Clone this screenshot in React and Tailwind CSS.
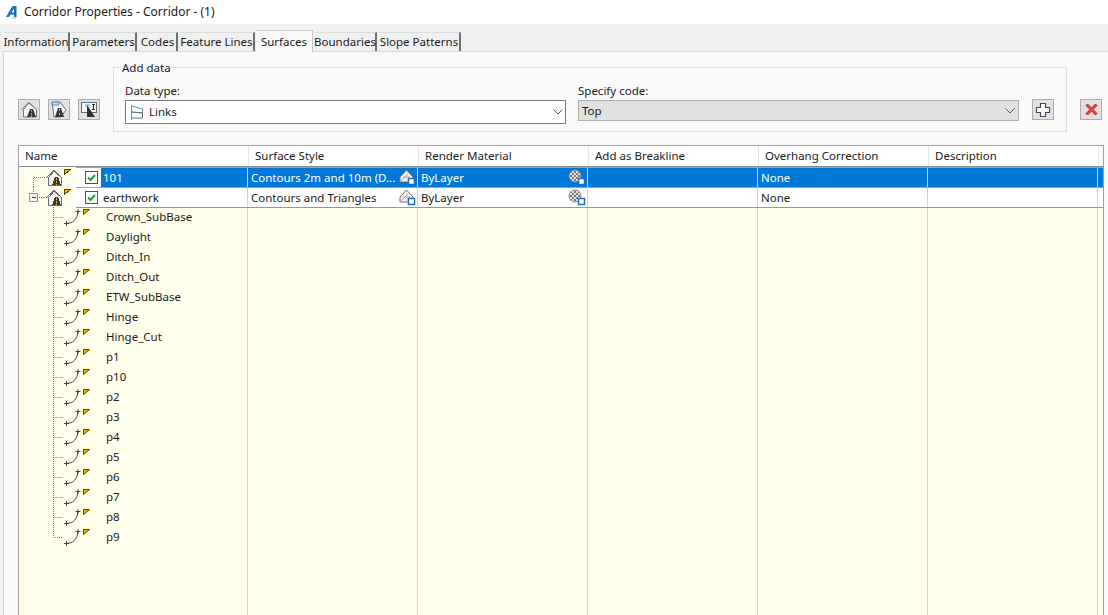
import React from "react";

const tabs = [
  ["Information", "w-[66px]"],
  ["Parameters", "w-[65px]"],
  ["Codes", "w-[39px]"],
  ["Feature Lines", "w-[75px]"],
  ["Surfaces", "w-[57px]"],
  ["Boundaries", "w-[62px]"],
  ["Slope Patterns", "w-[82px]"],
];
const columns = ["Surface Style", "Render Material", "Add as Breakline", "Overhang Correction", "Description"];
const children = ["Crown_SubBase", "Daylight", "Ditch_In", "Ditch_Out", "ETW_SubBase", "Hinge", "Hinge_Cut", "p1", "p10", "p2", "p3", "p4", "p5", "p6", "p7", "p8", "p9"];

function Marker({ x, y }) {
  return <path d={`M${x + 0.5} ${y + 0.5}h6l-6 5z`} fill="#f7b500" stroke="#5a4300" strokeWidth="1" />;
}

function HouseRoad({ x = 0, y = 0 }) {
  return (
    <g transform={`translate(${x} ${y})`}>
      <path d="M1.5 8.5L9 1.5l7.5 7" fill="#f4f4f4" stroke="#66707a" />
      <path d="M3.5 8.5v7.5h13V8.5L9 2z" fill="#f4f4f4" stroke="#66707a" />
      <path d="M7 16l3-8h3l3 8z" fill="#333a40" />
      <path d="M11.5 9v1.5M11.5 12v1.5M11.5 14.5V16" stroke="#f2c200" />
    </g>
  );
}

function Elbow({ x }) {
  return (
    <g transform={`translate(${x} 0)`} stroke="#3f4850" fill="none">
      <path d="M2.5 16.5c6 0 11-4 11.5-12.500" />
      <path d="M0 16.500h5M2.500 14v5M11.500 4.500h5M14 2v5" />
    </g>
  );
}

function StyleIcon() {
  return (
    <svg width="17" height="17" viewBox="0 0 17 17" className="shrink-0">
      <path d="M1 8L7.500 1 14 8v5H1z" fill="#efefef" stroke="#6d6d6d" />
      <path d="M1 13L9 5M4 8h7" stroke="#aaa" />
      <rect x="9.500" y="9.500" width="6" height="6" fill="#fff" stroke="#1d6fc0" strokeWidth="1.500" />
    </svg>
  );
}

function MaterialIcon({ id }) {
  return (
    <svg width="18" height="17" viewBox="0 0 18 17" className="shrink-0">
      <defs>
        <pattern id={id} width="4" height="4" patternUnits="userSpaceOnUse">
          <rect width="4" height="4" fill="#e4e4e4" />
          <rect width="2" height="2" fill="#777" />
          <rect x="2" y="2" width="2" height="2" fill="#777" />
        </pattern>
      </defs>
      <circle cx="7" cy="7" r="6" fill={`url(#${id})`} stroke="#8a8a8a" />
      <rect x="10.500" y="9.500" width="6" height="6" fill="#fff" stroke="#1d6fc0" strokeWidth="1.500" />
    </svg>
  );
}

function Check() {
  return (
    <span className="flex h-[13px] w-[13px] items-center justify-center border border-[#33597f] bg-white">
      <svg width="11" height="11" viewBox="0 0 11 11">
        <path d="M2 5.500l2.500 2.500L9 3" fill="none" stroke="#1f9b35" strokeWidth="2" />
      </svg>
    </span>
  );
}

function Chevron() {
  return (
    <svg width="10" height="6" viewBox="0 0 10 6">
      <path d="M.5.500L5 5 9.500.500" fill="none" stroke="#555" />
    </svg>
  );
}

function ToolButton({ children: icon }) {
  return (
    <button className="flex h-[21px] w-[22px] shrink-0 items-center justify-center border border-[#adadad] bg-[#e1e1e1]">
      {icon}
    </button>
  );
}

function BodyCells({ first, second, third, selected, fifth = false }) {
  const line = "border-r border-[#ffc0c0]";
  const text = selected ? "text-white" : "text-[#1a1a1a]";
  return (
    <>
      <div className={`flex h-full w-[170px] shrink-0 items-center justify-between pl-[3px] pr-px ${line} ${text}`}>
        <span>{first}</span>
        {second}
      </div>
      <div className={`flex h-full w-[170px] shrink-0 items-center justify-between pl-[3px] pr-px ${line} ${text}`}>
        <span>{fifth ? "ByLayer" : ""}</span>
        {third}
      </div>
      <div className={`h-full w-[170px] shrink-0 ${line}`} />
      <div className={`flex h-full w-[170px] shrink-0 items-center pl-[3px] ${line} ${text}`}>{fifth ? "None" : ""}</div>
      <div className={`h-full w-[170px] shrink-0 ${line}`} />
    </>
  );
}

function SurfaceRow({ tree, name, surface, icon, material, selected }) {
  return (
    <div className={`flex h-5 shrink-0 ${selected ? "" : "relative z-10"}`}>
      <div className="flex h-full w-[57px] shrink-0 bg-[#ffffeb]">
        <svg width="57" height="20" viewBox="0 0 57 20" shapeRendering="crispEdges">
          {tree}
        </svg>
      </div>
      <div className={`flex min-w-0 flex-1 border-t border-[#8fa7bf] ${selected ? "bg-[#0078d7] shadow-none" : "bg-white shadow-[0_1px_0_#7f9db9]"}`}>
        <div className="flex h-full w-[172px] shrink-0 border-r border-[#ffc0c0]">
          <div className="flex h-full w-[25px] shrink-0 items-center bg-white pl-[9px]">
            <Check />
          </div>
          <div className={`flex flex-1 items-center pl-[2px] ${selected ? "text-white" : "text-[#1a1a1a]"}`}>{name}</div>
        </div>
        <BodyCells first={surface} second={icon} third={material} selected={selected} fifth />
      </div>
    </div>
  );
}

export default function App() {
  return (
    <div className="flex h-[615px] w-[1108px] flex-col overflow-hidden bg-[#f0f0f0] font-['Noto_Sans',sans-serif] text-[11.500px] leading-4 text-[#1a1a1a]">
      <div className="flex h-6 shrink-0 items-center gap-[7px] bg-white pl-[6px] text-[12px]">
        <svg width="11" height="14" viewBox="0 0 11 14">
          <path d="M0 12L6.500 1H10.500V12H8V9.500H4.500L3 12zM5.500 7.500H8V3.500z" fill="#1f6fb2" fillRule="evenodd" />
          <path d="M6 13h4" stroke="#9dbbd4" />
        </svg>
        <span>Corridor Properties - Corridor - (1)</span>
      </div>

      <div className="flex h-[27px] shrink-0 items-end gap-[2px] pl-[4px]">
        {tabs.map(([tab, width]) =>
          tab === "Surfaces" ? (
            <div key={tab} className={`relative z-10 -mb-px -ml-[1px] flex h-[22px] ${width} shrink-0 items-center justify-center border-r border-t border-[#c8c8c8] bg-[#f9f9f9]`}>
              {tab}
            </div>
          ) : (
            <div key={tab} className={`flex h-[19px] ${width} shrink-0 items-center justify-center whitespace-nowrap border-r-2 border-t border-r-[#6f6f6f] border-t-[#dcdcdc] bg-[#f0f0f0]`}>
              {tab}
            </div>
          )
        )}
      </div>

      <div className="ml-[3px] flex min-h-0 flex-1 flex-col border-t border-l border-[#d9d9d9] bg-[#f9f9f9] pt-[15px]">
        <div className="flex shrink-0 items-start">
          <div className="flex w-[109px] shrink-0 gap-2 pl-[14px] pt-[32px]">
            <ToolButton>
              <svg width="18" height="17" viewBox="0 0 18 17" shapeRendering="geometricPrecision"><HouseRoad /></svg>
            </ToolButton>
            <ToolButton>
              <svg width="18" height="17" viewBox="0 0 18 17">
                <path d="M2 1h8l6 8-5 7H4z" fill="#f4f4f4" stroke="#66707a" />
                <path d="M2 1h7v3H2z" fill="#bcd7f2" stroke="#5d90c7" />
                <path d="M5 16l3-9h3l3 9z" fill="#333a40" />
                <path d="M9.500 8v2M9.500 12v2" stroke="#f2c200" />
              </svg>
            </ToolButton>
            <ToolButton>
              <svg width="18" height="17" viewBox="0 0 18 17">
                <rect x="1.500" y="1.500" width="15" height="10" fill="#f4f4f4" stroke="#66707a" />
                <path d="M5 3h5v3H5z" fill="#a9cdf0" />
                <path d="M7 4l8 12H7z" fill="#2c3237" />
                <path d="M12 3.500h3M13.500 3.500v5M12 8.500h3" stroke="#2c3237" fill="none" />
              </svg>
            </ToolButton>
          </div>
          <div className="relative flex h-[65px] w-[954px] shrink-0 border border-[#dcdcdc] pl-[11px] pt-[15px]">
            <span className="absolute -top-[8px] left-[7px] bg-[#f9f9f9] px-[1px]">Add data</span>
            <div className="flex w-[441px] shrink-0 flex-col">
              <span className="h-4">Data type:</span>
              <div className="mt-px flex h-6 items-center justify-between border border-[#7a7a7a] bg-white pl-[4px] pr-[2px]">
                <span className="flex items-center gap-[5px]">
                  <svg width="14" height="17" viewBox="0 0 14 17">
                    <path d="M1.500 1v15M1.500 2l11 3v4l-11-1" fill="none" stroke="#5d90c7" />
                    <path d="M1.500 8l11 1v5h-11" fill="none" stroke="#66707a" />
                  </svg>
                  Links
                </span>
                <Chevron />
              </div>
            </div>
            <div className="ml-3 flex w-[441px] shrink-0 flex-col">
              <span className="h-4">Specify code:</span>
              <div className="mt-px flex h-[21px] items-center justify-between border border-[#adadad] bg-[#e1e1e1] pl-[3px] pr-[3px]">
                <span>Top</span>
                <Chevron />
              </div>
            </div>
            <div className="ml-[13px] mt-[16px]">
              <ToolButton>
                <svg width="16" height="16" viewBox="0 0 16 16">
                  <path d="M5.500 1.500h5v4h4v5h-4v4h-5v-4h-4v-5h4z" fill="#fff" stroke="#3b4a5a" strokeWidth="1.200" />
                </svg>
              </ToolButton>
            </div>
          </div>
          <div className="ml-[13px] mt-[32px]">
            <ToolButton>
              <svg width="15" height="15" viewBox="0 0 15 15">
                <path d="M2 3.500L3.500 2 7.500 6l4-4L13 3.500l-4 4 4 4L11.500 13l-4-4-4 4L2 11.500l4-4z" fill="#f04a4a" stroke="#b01818" />
              </svg>
            </ToolButton>
          </div>
        </div>

        <div className="ml-[14px] mt-[13px] flex min-h-0 w-[1086px] flex-1 flex-col border-x border-t border-x-[#a0a0a0] border-t-[#a0a0a0]">
          <div className="flex h-[20px] shrink-0">
            <div className="flex w-[230px] shrink-0 items-center border-r border-[#e5e5e5] bg-white pl-[6px]">Name</div>
            {columns.map((column) => (
              <div key={column} className="flex w-[170px] shrink-0 items-center border-r border-[#e5e5e5] bg-white pl-[6px]">
                {column}
              </div>
            ))}
          </div>
          <div className="flex min-h-0 flex-1 flex-col overflow-hidden border-t border-[#8a8a8a] bg-[#ffffeb] [box-shadow:inset_0_1px_0_#c8c8c8]">
            <SurfaceRow
              selected
              name="101"
              surface="Contours 2m and 10m (D..."
              icon={<StyleIcon />}
              material={<MaterialIcon id="m1" />}
              tree={
                <>
                  <path d="M14.500 10.500H26M14.500 10.500V20" stroke="#777" strokeDasharray="1 1" fill="none" />
                  <HouseRoad x={26} y={2} />
                  <Marker x={45} y={2} />
                </>
              }
            />
            <SurfaceRow
              name="earthwork"
              surface="Contours and Triangles"
              icon={<StyleIcon />}
              material={<MaterialIcon id="m2" />}
              tree={
                <>
                  <path d="M14.500 0V6M18 10.500H26M34.500 18V20" stroke="#777" strokeDasharray="1 1" fill="none" />
                  <rect x="10.500" y="6.500" width="8" height="8" fill="#f4f6f8" stroke="#8a97a5" />
                  <path d="M12.500 10.500h4" stroke="#2d3f58" />
                  <HouseRoad x={26} y={2} />
                  <Marker x={45} y={2} />
                </>
              }
            />
            {children.map((child, index) => (
              <div key={child} className="flex h-5 shrink-0">
                <div className="flex h-full w-[229px] shrink-0 items-center border-r border-[#ffc0c0]">
                  <svg width="87" height="20" viewBox="0 0 87 20" className="shrink-0">
                    <path
                      d={index === children.length - 1 ? "M34.500 0V10.500H44" : "M34.500 0V20M34.500 10.500H44"}
                      stroke="#777"
                      strokeDasharray="1 1"
                      fill="none"
                    />
                    <Elbow x={45} />
                    <Marker x={64} y={2} />
                  </svg>
                  <span>{child}</span>
                </div>
                <BodyCells />
              </div>
            ))}
            <div className="flex min-h-0 flex-1">
              <div className="h-full w-[229px] shrink-0 border-r border-[#ffc0c0]" />
              <BodyCells />
            </div>
          </div>
        </div>
      </div>
    </div>
  );
}
